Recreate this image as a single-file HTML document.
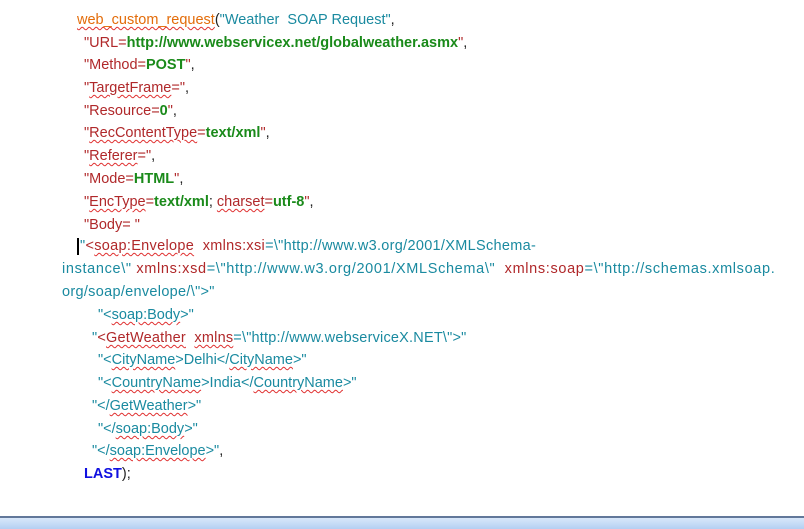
<!DOCTYPE html>
<html><head><meta charset="utf-8"><style>
html,body{margin:0;padding:0;width:804px;height:529px;overflow:hidden;background:#fff;position:relative}
.l{position:absolute;white-space:pre;font-family:"Liberation Sans",sans-serif;font-size:14.5px;line-height:16px;color:#1a8aa0}
.r{color:#b0282a}.g{color:#1a8a1a;font-weight:bold}.o{color:#e36c0a}.b{color:#1010e0;font-weight:bold}.k{color:#222}
.s{text-decoration:underline wavy #e03030;text-decoration-thickness:1px;text-underline-offset:2px}
.bar1{position:absolute;left:0;top:516px;width:804px;height:2px;background:#62789a}
.bar2{position:absolute;left:0;top:518px;width:804px;height:11px;background:linear-gradient(#d8e7fa,#c6dcf6 50%,#b4cff2)}
.cur{position:absolute;left:77px;top:238px;width:2px;height:17px;background:#000}
</style></head><body>
<div class="l" style="left:77px;top:12px"><span class="o s">web_custom_request</span><span class="k">(</span>"Weather  SOAP Request"<span class="k">,</span></div>
<div class="l r" style="left:84px;top:35px">"URL=<span class="g">http://www.webservicex.net/globalweather.asmx</span>"<span class="k">,</span></div>
<div class="l r" style="left:84px;top:57px">"Method=<span class="g">POST</span>"<span class="k">,</span></div>
<div class="l r" style="left:84px;top:80px">"<span class="s">TargetFrame</span>="<span class="k">,</span></div>
<div class="l r" style="left:84px;top:103px">"Resource=<span class="g">0</span>"<span class="k">,</span></div>
<div class="l r" style="left:84px;top:125px">"<span class="s">RecContentType</span>=<span class="g">text/xml</span>"<span class="k">,</span></div>
<div class="l r" style="left:84px;top:148px">"<span class="s">Referer</span>="<span class="k">,</span></div>
<div class="l r" style="left:84px;top:171px">"Mode=<span class="g">HTML</span>"<span class="k">,</span></div>
<div class="l r" style="left:84px;top:194px">"<span class="s">EncType</span>=<span class="g">text/xml</span><span class="k">; </span><span class="s">charset</span>=<span class="g">utf-8</span>"<span class="k">,</span></div>
<div class="l r" style="left:84px;top:217px">"Body= "</div>
<div class="cur"></div>
<div class="l" style="left:80px;top:238px;letter-spacing:0.3px">"<span class="r">&lt;<span class="s">soap:Envelope</span>  xmlns:xsi</span>=\"http://www.w3.org/2001/XMLSchema-</div>
<div class="l" style="left:62px;top:261px;letter-spacing:0.65px">instance\" <span class="r">xmlns:xsd</span>=\"http://www.w3.org/2001/XMLSchema\"  <span class="r">xmlns:soap</span>=\"http://schemas.xmlsoap.</div>
<div class="l" style="left:62px;top:284px;letter-spacing:0.3px">org/soap/envelope/\"&gt;"</div>
<div class="l" style="left:98px;top:307px">"&lt;<span class="s">soap:Body</span>&gt;"</div>
<div class="l" style="left:92px;top:330px;letter-spacing:0.2px">"<span class="r">&lt;<span class="s">GetWeather</span>  <span class="s">xmlns</span></span>=\"http://www.webserviceX.NET\"&gt;"</div>
<div class="l" style="left:98px;top:352px">"&lt;<span class="s">CityName</span>&gt;Delhi&lt;/<span class="s">CityName</span>&gt;"</div>
<div class="l" style="left:98px;top:375px">"&lt;<span class="s">CountryName</span>&gt;India&lt;/<span class="s">CountryName</span>&gt;"</div>
<div class="l" style="left:92px;top:398px">"&lt;/<span class="s">GetWeather</span>&gt;"</div>
<div class="l" style="left:98px;top:421px">"&lt;/<span class="s">soap:Body</span>&gt;"</div>
<div class="l" style="left:92px;top:443px">"&lt;/<span class="s">soap:Envelope</span>&gt;"<span class="k">,</span></div>
<div class="l" style="left:84px;top:466px"><span class="b">LAST</span><span class="k">);</span></div>
<div class="bar1"></div><div class="bar2"></div>
</body></html>
